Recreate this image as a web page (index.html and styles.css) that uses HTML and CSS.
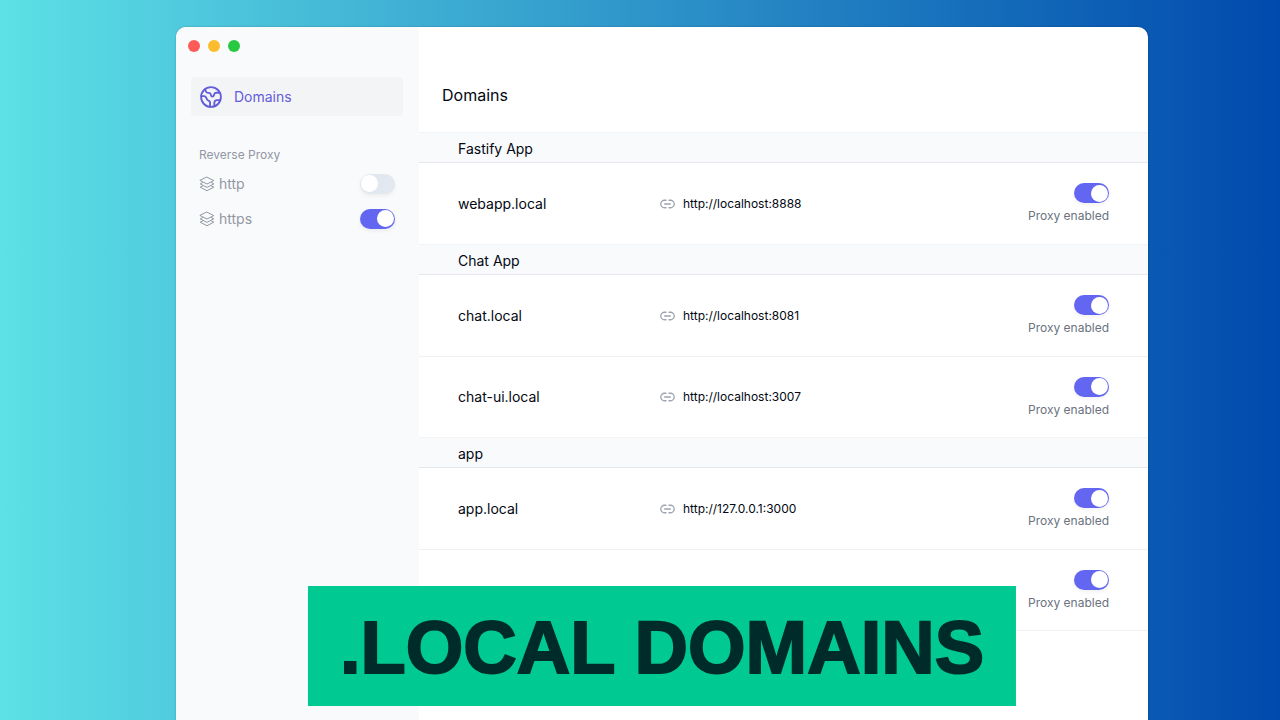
FILE: index.html
```
<!DOCTYPE html>
<html lang="en">
<head>
    <meta charset="UTF-8">
    <meta name="viewport" content="width=device-width, initial-scale=1.0">
    <title>Domains</title>
    <link rel="stylesheet" href="styles.css">
</head>
<body>

<!-- Shared icons -->
<svg class="sprite" aria-hidden="true">
    <symbol id="icon-layers" viewBox="0 0 16 16">
        <path d="M8 1.2 14.8 4.6 8 8 1.2 4.6Z"/>
        <path d="M3.6 6.6 1.2 7.9 8 11.4l6.8-3.5-2.4-1.3"/>
        <path d="M3.6 9.9 1.2 11.2 8 14.7l6.8-3.5-2.4-1.3"/>
    </symbol>
    <symbol id="icon-link" viewBox="0 0 16 10">
        <path d="M6.4 1H4.8a4 4 0 0 0 0 8h1.6M9.6 1h1.6a4 4 0 0 1 0 8H9.6M5 5h6"/>
    </symbol>
</svg>

<div class="window">
    <aside class="sidebar">
        <div class="traffic-lights">
            <span class="light light-close"></span>
            <span class="light light-minimize"></span>
            <span class="light light-zoom"></span>
        </div>

        <nav>
            <a class="nav-item" href="#domains">
                <svg class="globe-icon" viewBox="0 0 24 24" aria-hidden="true">
                    <circle cx="12" cy="12" r="10.8"/>
                    <path d="M1.4 11h3.2c1 0 1.6.5 2 1.4l.9 2c.3.7.8 1.1 1.5 1.4l.8.4c.8.4 1.2 1 1.2 1.9v4.5"/>
                    <path d="M5.4 3.6l1.2 2.6c.4.8 1 1.3 1.9 1.3h1.2c1 0 1.7.6 2 1.5l.3 1.2c.3 1.6 2.6 1.7 3.1.1l.5-1.5c.3-.9 1-1.4 1.9-1.4h4"/>
                    <path d="M15.6 22v-3.2c0-2.2 1-3.4 3-3.4h3.5"/>
                </svg>
                Domains
            </a>
        </nav>

        <section class="proxy-section">
            <h2 class="section-title">Reverse Proxy</h2>
            <div class="proxy-row">
                <label class="proxy-label" for="proxy-http"><svg class="layers-icon" aria-hidden="true"><use href="#icon-layers"/></svg>http</label>
                <input class="toggle" type="checkbox" id="proxy-http">
            </div>
            <div class="proxy-row">
                <label class="proxy-label" for="proxy-https"><svg class="layers-icon" aria-hidden="true"><use href="#icon-layers"/></svg>https</label>
                <input class="toggle" type="checkbox" id="proxy-https" checked>
            </div>
        </section>
    </aside>

    <main class="content" id="domains">
        <h1 class="page-title">Domains</h1>

        <section>
            <h2 class="group-title">Fastify App</h2>
            <div class="domain-row">
                <span class="domain-name">webapp.local</span>
                <a class="domain-url" href="http://localhost:8888"><svg class="link-icon" aria-hidden="true"><use href="#icon-link"/></svg>http://localhost:8888</a>
                <div class="domain-status">
                    <input class="toggle" type="checkbox" id="domain-webapp" checked>
                    <label for="domain-webapp">Proxy enabled</label>
                </div>
            </div>
        </section>

        <section>
            <h2 class="group-title">Chat App</h2>
            <div class="domain-row">
                <span class="domain-name">chat.local</span>
                <a class="domain-url" href="http://localhost:8081"><svg class="link-icon" aria-hidden="true"><use href="#icon-link"/></svg>http://localhost:8081</a>
                <div class="domain-status">
                    <input class="toggle" type="checkbox" id="domain-chat" checked>
                    <label for="domain-chat">Proxy enabled</label>
                </div>
            </div>
            <div class="domain-row">
                <span class="domain-name">chat-ui.local</span>
                <a class="domain-url" href="http://localhost:3007"><svg class="link-icon" aria-hidden="true"><use href="#icon-link"/></svg>http://localhost:3007</a>
                <div class="domain-status">
                    <input class="toggle" type="checkbox" id="domain-chat-ui" checked>
                    <label for="domain-chat-ui">Proxy enabled</label>
                </div>
            </div>
        </section>

        <section class="last-group">
            <h2 class="group-title">app</h2>
            <div class="domain-row">
                <span class="domain-name">app.local</span>
                <a class="domain-url" href="http://127.0.0.1:3000"><svg class="link-icon" aria-hidden="true"><use href="#icon-link"/></svg>http://127.0.0.1:3000</a>
                <div class="domain-status">
                    <input class="toggle" type="checkbox" id="domain-app" checked>
                    <label for="domain-app">Proxy enabled</label>
                </div>
            </div>
            <div class="domain-row">
                <div class="domain-status">
                    <input class="toggle" type="checkbox" id="domain-last" checked>
                    <label for="domain-last">Proxy enabled</label>
                </div>
            </div>
        </section>
    </main>

    <div class="caption">.LOCAL DOMAINS</div>
</div>

</body>
</html>
```
FILE: styles.css
```
* {
    box-sizing: border-box;
}

body {
    margin: 0;
    padding: 27px 132px 0 176px;
    min-height: 100vh;
    display: flex;
    font-family: Inter, "Liberation Sans", sans-serif;
    font-size: 14px;
    line-height: 20px;
    color: #030712;
    background: linear-gradient(90deg, #5de0e6, #004aad);
}

h1,
h2 {
    margin: 0;
    font-weight: 400;
}

a {
    color: inherit;
    text-decoration: none;
}

svg {
    flex: none;
    fill: none;
    stroke: currentColor;
    stroke-linecap: round;
    stroke-linejoin: round;
}

.sprite {
    position: absolute;
    width: 0;
    height: 0;
}

.window {
    position: relative;
    flex: 1;
    display: flex;
    background: #fff;
    border-radius: 10px 10px 0 0;
    overflow: hidden;
    box-shadow: 0 0 2px rgba(0, 0, 0, 0.3);
}

/* Sidebar */
.sidebar {
    flex: 0 0 243px;
    padding: 13px 16px 16px 15px;
    background: #f9fafc;
}

.traffic-lights {
    display: flex;
    gap: 8px;
    margin: 0 -3px 25px;
}

.light {
    width: 12px;
    height: 12px;
    border-radius: 50%;
}

.light-close {
    background: #fc5b57;
}

.light-minimize {
    background: #fdbc2e;
}

.light-zoom {
    background: #28c840;
}

.nav-item {
    display: flex;
    align-items: center;
    gap: 12px;
    height: 39px;
    padding: 0 9px;
    border-radius: 4px;
    color: #635cdb;
    background: #f3f4f6;
}

.globe-icon {
    width: 22px;
    height: 22px;
    stroke-width: 2;
}

.proxy-section {
    padding: 29px 8px 0;
}

.section-title {
    margin-bottom: 1px;
    font-size: 12px;
    color: #9197a3;
}

.proxy-row {
    display: flex;
    align-items: center;
    justify-content: space-between;
    height: 35px;
}

.proxy-label {
    display: flex;
    align-items: center;
    gap: 4px;
    color: #9197a3;
}

.layers-icon {
    width: 16px;
    height: 16px;
}

/* Toggle switch */
.toggle {
    appearance: none;
    display: flex;
    align-items: center;
    width: 35px;
    height: 20px;
    margin: 0;
    padding: 0 1px;
    border-radius: 10px;
    background: #e2e8f0;
    box-shadow: 0 2px 4px rgba(0, 0, 0, 0.06);
    cursor: pointer;
}

.toggle::before {
    content: "";
    width: 17px;
    height: 17px;
    border-radius: 50%;
    background: #fff;
}

.toggle:checked {
    justify-content: flex-end;
    background: #6366f1;
}

/* Domain list */
.content {
    flex: 1;
}

.page-title {
    padding: 56px 23px 25px;
    font-size: 16px;
    line-height: 24px;
}

.group-title {
    height: 31px;
    padding: 0 39px;
    font-size: 14px;
    line-height: 32px;
    background: #f9fafc;
    border-top: 1px solid #f3f4f6;
    border-bottom: 1px solid #e5e7eb;
}

.domain-row {
    display: flex;
    align-items: center;
    height: 81px;
    padding: 0 39px;
}

.domain-row + .domain-row {
    border-top: 1px solid #f0f1f3;
}

.last-group {
    border-bottom: 1px solid #f0f1f3;
}

.domain-name {
    flex: 0 0 202px;
}

.domain-url {
    display: flex;
    align-items: center;
    gap: 8px;
    font-size: 12px;
}

.link-icon {
    width: 15px;
    height: 10px;
    stroke-width: 1.4;
    color: #9ca3af;
}

.domain-status {
    display: flex;
    flex-direction: column;
    align-items: flex-end;
    gap: 5px;
    margin-left: auto;
    font-size: 12px;
    line-height: 16px;
    color: #6b7280;
}

/* Title strip over the window */
.caption {
    position: absolute;
    left: 50%;
    bottom: 14px;
    transform: translateX(-50%);
    padding: 4px 32px 0;
    font-family: "Liberation Sans", Arial, sans-serif;
    font-size: 74px;
    line-height: 116px;
    font-weight: 700;
    white-space: nowrap;
    color: #002b2b;
    background: #00ca92;
    -webkit-text-stroke: 2px #002b2b;
}
```
